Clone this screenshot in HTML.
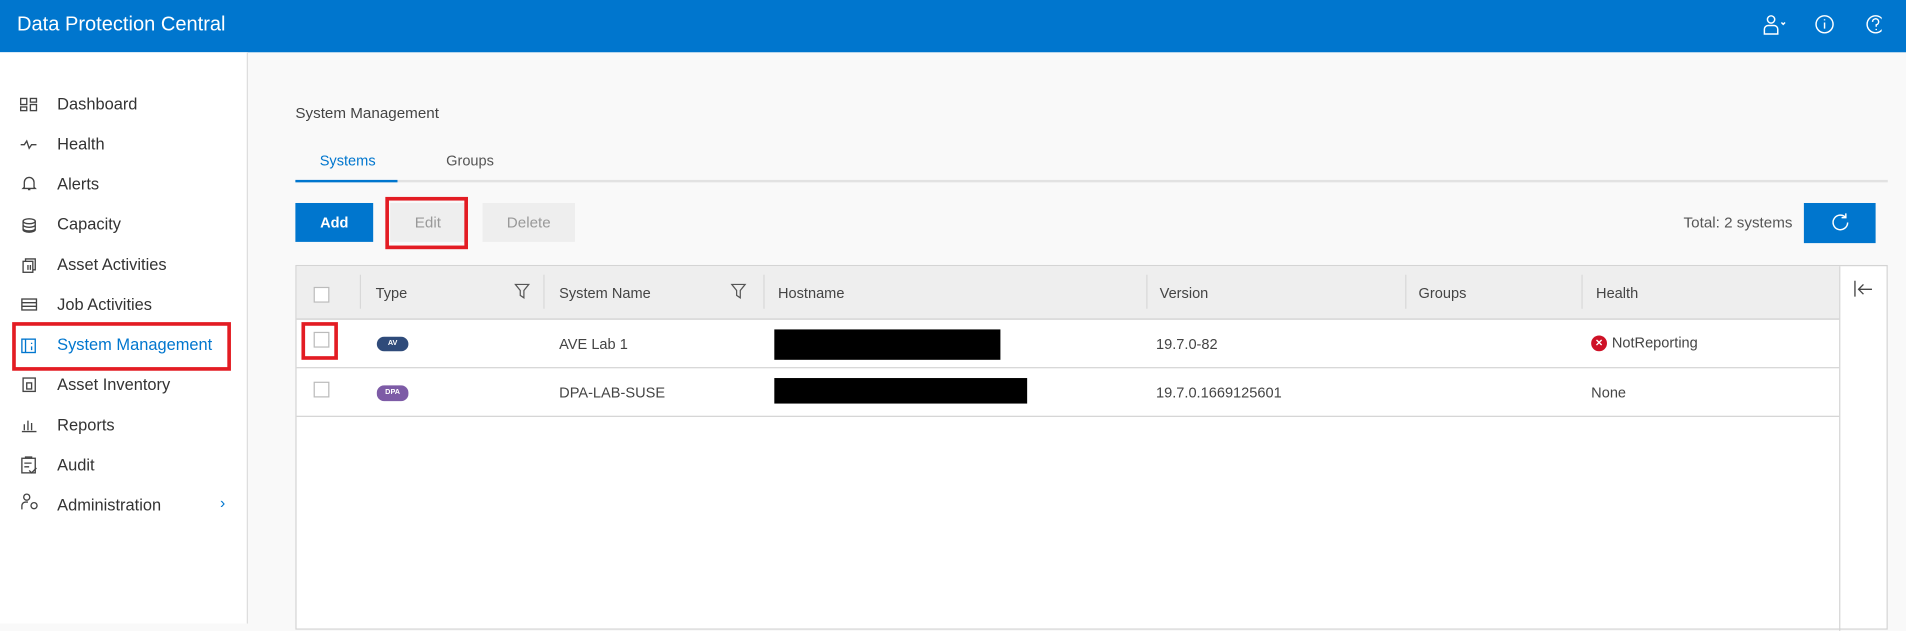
<!DOCTYPE html>
<html><head><meta charset="utf-8"><style>
html,body{margin:0;padding:0;width:1906px;height:616px;overflow:hidden;background:#f9f9f9;font-family:"Liberation Sans",sans-serif}
#w{position:absolute;left:0;top:0;width:1568px;height:510px;transform:scale(1.21556);transform-origin:0 0;background:#f9f9f9}
.a{position:absolute}
.hdr{left:0;top:0;width:1568px;height:43px;background:#0076ce}
.side{left:0;top:43px;width:203px;height:470px;background:#fff;border-right:1px solid #ddd}
.nav{position:absolute;left:47px;font-size:13.5px;color:#333;line-height:16px}
.t{font-size:12px;color:#444;line-height:14px}
.btn{position:absolute;top:167px;height:32px;font-size:12.5px;line-height:32px;text-align:center}
.cb{position:absolute;width:11px;height:11px;border:1px solid #bbb;background:#fff}
.sep{position:absolute;top:226px;width:1px;height:28px;background:#d8d8d8}
.red{position:absolute;border:3px solid #e31c23;box-sizing:border-box}
</style></head><body><div id="w">
<div class="a hdr"></div>
<div class="a" style="left:14px;top:11px;color:#fff;font-size:16.5px">Data Protection Central</div>
<svg class="a" style="left:1448px;top:11px" width="100" height="20" viewBox="0 0 100 20" fill="none" stroke="#fff" stroke-width="1.2">
<circle cx="9" cy="5" r="3"/><path d="M3.5 17v-4a3 3 0 0 1 3-3h5a3 3 0 0 1 3 3v4z"/><path d="M17.5 7.5l1.5 1.5 1.5-1.5"/>
<circle cx="53" cy="9" r="7"/><path d="M53 7.5v5M53 4.8v1"/>
<circle cx="95" cy="9" r="7"/><path d="M92.5 7a2.5 2.5 0 1 1 3 2.4v1.6M95.5 12.8v1"/>
</svg>
<div class="a side"></div>
<div class="nav" style="top:78px">Dashboard</div>
<div class="nav" style="top:111px">Health</div>
<div class="nav" style="top:144px">Alerts</div>
<div class="nav" style="top:177px">Capacity</div>
<div class="nav" style="top:210px">Asset Activities</div>
<div class="nav" style="top:243px">Job Activities</div>
<div class="nav" style="top:276px;color:#0076ce">System Management</div>
<div class="nav" style="top:309px">Asset Inventory</div>
<div class="nav" style="top:342px">Reports</div>
<div class="nav" style="top:375px">Audit</div>
<div class="nav" style="top:408px">Administration</div>
<div class="a" style="left:181px;top:406px;color:#0076ce;font-size:13px">›</div>
<svg class="a" style="left:14px;top:78px" width="20" height="345" viewBox="0 0 20 345" fill="none" stroke="#444" stroke-width="1.1">
<rect x="3" y="3" width="5" height="5"/><rect x="11" y="3" width="5" height="3"/><rect x="3" y="10" width="5" height="3"/><rect x="11" y="8" width="5" height="5"/>
<path d="M3 41h3l2-3 2 6 2-3h4"/>
<path d="M6 76v-4a4 4 0 0 1 8 0v4l1 1H5zM9 78h2"/>
<ellipse cx="10" cy="104" rx="5" ry="2"/><path d="M5 104v7c0 1 2 2 5 2s5-1 5-2v-7M5 107c0 1 2 2 5 2s5-1 5-2M5 110c0 1 2 2 5 2s5-1 5-2"/>
<rect x="5" y="137" width="8" height="9"/><path d="M7 137v-2h8v9h-2M9 140v4M11 140v4"/>
<rect x="4" y="168" width="12" height="9"/><path d="M4 171h12M4 174h12"/>
<g stroke="#0076ce"><rect x="4" y="201" width="11" height="11"/><path d="M7 201v11M12 204v1M12 207v3"/></g>
<rect x="5" y="233" width="10" height="11"/><rect x="8" y="237" width="4" height="5"/>
<path d="M4 277h12M6 276v-5M9 276v-8M12 276v-6"/>
<rect x="4" y="299" width="11" height="12"/><path d="M7 299v-1h5v1M6 303h6M6 306h4M10 309l2 2 4-4"/>
<circle cx="8" cy="331" r="2.5"/><path d="M4 341v-3a3 3 0 0 1 3-3h2"/><circle cx="14" cy="338" r="2.5"/>
</svg>
<div class="red" style="left:10px;top:265px;width:180px;height:40px"></div>

<div class="a" style="left:243px;top:86px;font-size:12.5px;color:#444">System Management</div>
<div class="a" style="left:263px;top:125px;font-size:12px;color:#0076ce">Systems</div>
<div class="a" style="left:367px;top:125px;font-size:12px;color:#555">Groups</div>
<div class="a" style="left:243px;top:148px;width:1310px;height:2px;background:#e2e2e2"></div>
<div class="a" style="left:243px;top:148px;width:84px;height:2px;background:#0076ce"></div>

<div class="btn" style="left:243px;width:64px;background:#0076ce;color:#fff;font-weight:bold;font-size:12px">Add</div>
<div class="btn" style="left:321px;width:62px;background:#eee;color:#999">Edit</div>
<div class="red" style="left:317px;top:162px;width:68px;height:43px"></div>
<div class="btn" style="left:397px;width:76px;background:#eee;color:#999">Delete</div>
<div class="a" style="left:1385px;top:176px;font-size:12.5px;color:#555">Total: 2 systems</div>
<div class="btn" style="left:1484px;width:59px;height:33px;background:#0076ce"></div>
<svg class="a" style="left:1505px;top:174px" width="18" height="18" viewBox="0 0 18 18" fill="none" stroke="#fff" stroke-width="1.2"><path d="M13.5 5A6 6 0 1 0 15 9"/><path d="M13.5 1.5v3.5h-3.5"/></svg>

<div class="a" style="left:243px;top:218px;width:1310px;height:300px;background:#fff;border:1px solid #d4d4d4;box-sizing:border-box"></div>
<div class="a" style="left:244px;top:219px;width:1269px;height:43px;background:#eee;border-bottom:1px solid #d0d0d0"></div>
<div class="a" style="left:1513px;top:219px;width:1px;height:300px;background:#d4d4d4"></div>
<div class="a" style="left:244px;top:302px;width:1269px;height:1px;background:#d4d4d4"></div>
<div class="a" style="left:244px;top:342px;width:1269px;height:1px;background:#d4d4d4"></div>
<svg class="a" style="left:1524px;top:230px" width="18" height="16" viewBox="0 0 18 16" fill="none" stroke="#444" stroke-width="1.1"><path d="M2 1v13M16 8H5M9 4L5 8l4 4"/></svg>

<div class="cb" style="left:258px;top:236px"></div>
<div class="sep" style="left:296px"></div><div class="sep" style="left:447px"></div><div class="sep" style="left:628px"></div><div class="sep" style="left:943px"></div><div class="sep" style="left:1156px"></div><div class="sep" style="left:1301px"></div>
<div class="a t" style="left:309px;top:234px">Type</div>
<div class="a t" style="left:460px;top:234px">System Name</div>
<div class="a t" style="left:640px;top:234px">Hostname</div>
<div class="a t" style="left:954px;top:234px">Version</div>
<div class="a t" style="left:1167px;top:234px">Groups</div>
<div class="a t" style="left:1313px;top:234px">Health</div>
<svg class="a" style="left:423px;top:233px" width="200" height="14" viewBox="0 0 200 14" fill="none" stroke="#555" stroke-width="1"><path d="M1 1h11L8 6v6L5 10V6z"/><path d="M179 1h11l-4 5v6l-3-2V6z"/></svg>

<div class="cb" style="left:258px;top:273px"></div>
<div class="red" style="left:248px;top:265px;width:30px;height:31px"></div>
<div class="a" style="left:310px;top:277px;width:26px;height:12px;border-radius:6px;background:#2f4b7a;color:#fff;font-size:6px;font-weight:bold;text-align:center;line-height:12px">AV</div>
<div class="a t" style="left:460px;top:276px">AVE Lab 1</div>
<div class="a" style="left:637px;top:271px;width:186px;height:25px;background:#000"></div>
<div class="a t" style="left:951px;top:276px">19.7.0-82</div>
<div class="a" style="left:1309px;top:276px;width:13px;height:13px;border-radius:50%;background:#ce1126;color:#fff;font-size:10px;font-weight:bold;text-align:center;line-height:13px">×</div>
<div class="a t" style="left:1326px;top:275px">NotReporting</div>

<div class="cb" style="left:258px;top:314px"></div>
<div class="a" style="left:310px;top:317px;width:26px;height:13px;border-radius:6px;background:#7d5ba6;color:#fff;font-size:6px;font-weight:bold;text-align:center;line-height:13px">DPA</div>
<div class="a t" style="left:460px;top:316px">DPA-LAB-SUSE</div>
<div class="a" style="left:637px;top:311px;width:208px;height:21px;background:#000"></div>
<div class="a t" style="left:951px;top:316px">19.7.0.1669125601</div>
<div class="a t" style="left:1309px;top:316px">None</div>
</div></body></html>
